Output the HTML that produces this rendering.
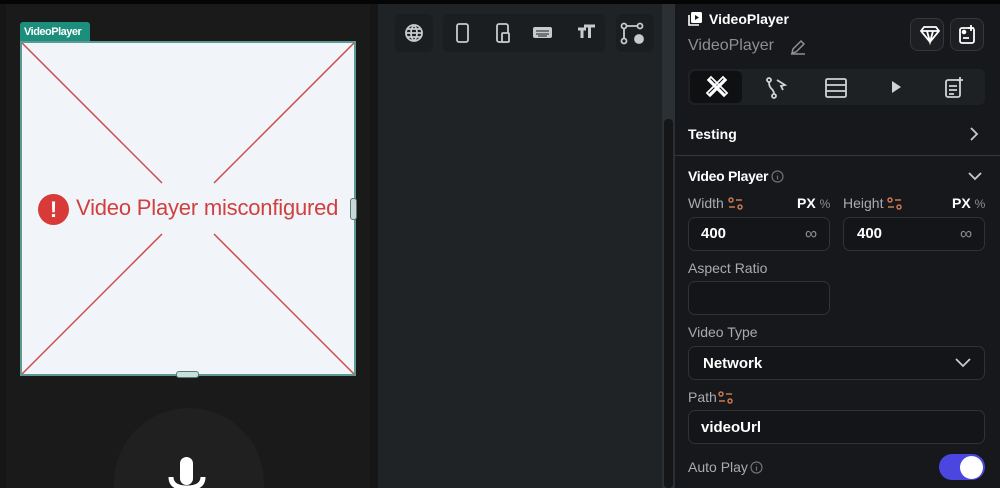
<!DOCTYPE html>
<html style="width:1000px;height:488px;overflow:hidden"><head><meta charset="utf-8"><style>
*{box-sizing:border-box;margin:0;padding:0}
body{width:1000px;height:488px;overflow:hidden;background:#1f2326;font-family:"Liberation Sans",sans-serif;position:relative}
.abs{position:absolute}
.lbl{color:#a9abb0;font-size:14px}
.inp{position:absolute;border:1px solid #2f3236;border-radius:7px;background:#141518}
.val{color:#fff;font-weight:bold;font-size:15px;position:absolute}
</style></head><body>
<svg class="abs" style="left:0;top:0" width="1000" height="488">
<rect x="0" y="0" width="1000" height="4" fill="#050505"/>
<rect x="0" y="4" width="378" height="484" fill="#161616"/>
<rect x="6" y="4" width="364" height="484" fill="#1a1a1a"/>
<circle cx="189" cy="483" r="75" fill="#202020"/>
<rect x="180" y="457" width="13" height="28" rx="6.5" fill="#fff"/>
<path d="M171 477 Q171 488 187 488 Q203 488 203 477" stroke="#fff" stroke-width="5" fill="none"/>
<rect x="662" y="4" width="13" height="484" fill="#2b3034"/>
<rect x="664" y="119" width="9" height="369" rx="4" fill="#141618"/>
<rect x="675" y="4" width="325" height="484" fill="#17181b"/>
<rect x="939" y="454" width="46" height="26" rx="13" fill="#4b46e0"/>
<circle cx="971.5" cy="467.5" r="11.5" fill="#fff"/>
</svg>
<div class="abs" style="left:20px;top:22px;width:70px;height:20px;background:#1b8e7c;border-radius:3px 3px 0 0;color:#fff;font-size:11px;font-weight:bold;padding:4px 0 0 4px;letter-spacing:-0.5px">VideoPlayer</div>
<div class="abs" style="left:20px;top:41px;width:336px;height:335px;background:#f1f4f8;border:2px solid #5a9a92"></div>
<svg class="abs" style="left:22px;top:43px" width="332" height="331"><line x1="0" y1="0" x2="140" y2="140" stroke="#d04a4a" stroke-width="1.5"/><line x1="332" y1="0" x2="192" y2="140" stroke="#d04a4a" stroke-width="1.5"/><line x1="0" y1="331" x2="140" y2="191" stroke="#d04a4a" stroke-width="1.5"/><line x1="332" y1="331" x2="192" y2="191" stroke="#d04a4a" stroke-width="1.5"/></svg>
<div class="abs" style="left:38px;top:194px;width:31px;height:31px;border-radius:50%;background:#d83a3a;color:#fff;font-weight:bold;font-size:22px;text-align:center;line-height:31px">!</div>
<div class="abs" style="left:76px;top:195px;color:#d0403f;font-size:22px;white-space:nowrap;letter-spacing:-0.2px">Video Player misconfigured</div>
<div class="abs" style="left:350px;top:198px;width:7px;height:22px;background:#c8d8d8;border:1px solid #5a7a78;border-radius:3px"></div>
<div class="abs" style="left:176px;top:371px;width:23px;height:7px;background:#c8e0dc;border:1px solid #5a7a78;border-radius:3px"></div>
<!-- middle toolbar -->
<div class="abs" style="left:395px;top:14px;width:38px;height:38px;background:#1b1e20;border-radius:6px"></div>
<div class="abs" style="left:443px;top:14px;width:162px;height:38px;background:#1b1e20;border-radius:6px"></div>
<div class="abs" style="left:616px;top:14px;width:38px;height:38px;background:#1b1e20;border-radius:6px"></div>
<svg class="abs" style="left:395px;top:14px" width="260" height="38" fill="none" stroke="#c8cacc" stroke-width="1.8">
<circle cx="19" cy="19" r="8"/><path d="M11 19h16M19 11c-4 4-4 12 0 16M19 11c4 4 4 12 0 16M12.5 15h13M12.5 23h13"/>
<rect x="62" y="10" width="11" height="18" rx="2"/>
<rect x="102" y="10" width="11" height="18" rx="2"/><rect x="107" y="19" width="7" height="9" rx="1" fill="#1b1e20"/>
<rect x="138" y="13" width="19" height="11" rx="2" fill="#c8cacc" stroke="none"/><path d="M141 17h13M141 20h13M143 22h9" stroke="#1b1e20" stroke-width="1"/>
<path d="M183 15h8M187 15v9M189 12h11M194.5 12v12" stroke-width="3"/>
<circle cx="229" cy="12" r="2.5"/><circle cx="245" cy="12" r="2.5"/><circle cx="229" cy="27" r="2.5"/><path d="M231.5 12h11M229 14.5v10"/><circle cx="244" cy="25" r="4" fill="#c8cacc"/>
</svg>
<!-- right panel -->
<svg class="abs" style="left:688px;top:12px" width="14" height="14"><rect x="3" y="0" width="11" height="11" rx="1.5" fill="#fff"/><path d="M1 3v10h10" stroke="#fff" stroke-width="1.6" fill="none"/><path d="M7 3l4 2.5-4 2.5z" fill="#17181b"/></svg>
<div class="abs" style="left:709px;top:11px;color:#fff;font-weight:bold;font-size:14px">VideoPlayer</div>
<div class="abs" style="left:688px;top:37px;color:#8c8f94;font-size:16px">VideoPlayer</div>
<svg class="abs" style="left:789px;top:38px" width="18" height="18" fill="none" stroke="#8c8f94" stroke-width="1.5"><path d="M3 15l1-4 8-8 3 3-8 8zM2 16h14"/></svg>
<div class="abs" style="left:910px;top:18px;width:34px;height:33px;border:1px solid #34373b;border-radius:8px;background:#1d1f22"></div>
<div class="abs" style="left:950px;top:18px;width:34px;height:33px;border:1px solid #34373b;border-radius:8px;background:#1d1f22"></div>
<svg class="abs" style="left:910px;top:18px" width="76" height="34" fill="none" stroke="#fff" stroke-width="1.8"><path d="M11 13l3-4h12l3 4-9 11z M11 13h18 M17 13l3 11 3-11"/><rect x="50" y="10" width="14" height="15" rx="2"/><circle cx="54" cy="14" r="1.4" fill="#fff"/><path d="M53 20h6M61 7v6M58 10h6"/></svg>
<div class="abs" style="left:688px;top:69px;width:297px;height:36px;background:#1e2124;border-radius:6px"></div>
<div class="abs" style="left:690px;top:71px;width:52px;height:32px;background:#0f1012;border-radius:5px"></div>
<svg class="abs" style="left:688px;top:69px" width="297" height="36" fill="none" stroke="#d0d2d5" stroke-width="1.8">
<path d="M21 10l16 16M37 10L21 26M23 8l-3 3 16 16 3-3zM35 8l3 3-16 16-3-3z" stroke="#fff"/>
<circle cx="81" cy="11" r="2"/><circle cx="86" cy="27" r="2"/><path d="M81 13c0 8 5 6 5 12M89 11l8 5-4 1 2 4"/>
<rect x="138" y="10" width="20" height="18" rx="1.5"/><path d="M138 16h20M138 22h20"/>
<path d="M204 12l9 6-9 6z" fill="#d0d2d5" stroke="none"/>
<rect x="258" y="11" width="14" height="17" rx="2"/><path d="M261 17h8M261 21h8M261 25h5M272 8v6M269 11h6"/>
</svg>
<div class="abs" style="left:688px;top:126px;color:#fff;font-weight:bold;font-size:14px">Testing</div>
<svg class="abs" style="left:968px;top:126px" width="12" height="16" fill="none" stroke="#c8cacc" stroke-width="1.8"><path d="M3 2l6 6-6 6"/></svg>
<div class="abs" style="left:675px;top:155px;width:325px;height:1px;background:#34373b"></div>
<div class="abs" style="left:688px;top:168px;color:#fff;font-weight:bold;font-size:14px;letter-spacing:-0.3px">Video Player</div>
<svg class="abs" style="left:771px;top:170px" width="13" height="13" fill="none" stroke="#6e7175" stroke-width="1.2"><circle cx="6.5" cy="6.5" r="5.5"/><path d="M6.5 5.5v4M6.5 3.5v.5"/></svg>
<svg class="abs" style="left:967px;top:170px" width="16" height="12" fill="none" stroke="#c8cacc" stroke-width="1.8"><path d="M2 3l6 6 6-6"/></svg>
<div class="abs lbl" style="left:688px;top:195px">Width</div>
<div class="abs lbl" style="left:843px;top:195px">Height</div>
<svg class="abs" style="left:728px;top:197px" width="16" height="14" fill="none" stroke="#c9784f" stroke-width="1.5"><circle cx="3" cy="3" r="2"/><path d="M8 3h6M1 10h6"/><circle cx="12" cy="10" r="2"/></svg>
<svg class="abs" style="left:887px;top:197px" width="16" height="14" fill="none" stroke="#c9784f" stroke-width="1.5"><circle cx="3" cy="3" r="2"/><path d="M8 3h6M1 10h6"/><circle cx="12" cy="10" r="2"/></svg>
<div class="abs" style="left:797px;top:195px;color:#fff;font-weight:bold;font-size:14px">PX <span style="color:#8c8f94;font-weight:normal;font-size:12px">%</span></div>
<div class="abs" style="left:952px;top:195px;color:#fff;font-weight:bold;font-size:14px">PX <span style="color:#8c8f94;font-weight:normal;font-size:12px">%</span></div>
<div class="inp" style="left:688px;top:217px;width:142px;height:34px"></div>
<div class="inp" style="left:843px;top:217px;width:142px;height:34px"></div>
<div class="val" style="left:701px;top:225px">400</div>
<div class="val" style="left:857px;top:225px">400</div>
<div class="abs" style="left:805px;top:224px;color:#8c8f94;font-size:17px">∞</div>
<div class="abs" style="left:960px;top:224px;color:#8c8f94;font-size:17px">∞</div>
<div class="abs lbl" style="left:688px;top:260px">Aspect Ratio</div>
<div class="inp" style="left:688px;top:281px;width:142px;height:34px"></div>
<div class="abs lbl" style="left:688px;top:324px">Video Type</div>
<div class="inp" style="left:688px;top:346px;width:297px;height:34px"></div>
<div class="val" style="left:703px;top:355px">Network</div>
<svg class="abs" style="left:954px;top:356px" width="18" height="14" fill="none" stroke="#c8cacc" stroke-width="1.8"><path d="M2 3l7 7 7-7"/></svg>
<div class="abs lbl" style="left:688px;top:389px">Path</div>
<svg class="abs" style="left:718px;top:391px" width="16" height="14" fill="none" stroke="#c9784f" stroke-width="1.5"><circle cx="3" cy="3" r="2"/><path d="M8 3h6M1 10h6"/><circle cx="12" cy="10" r="2"/></svg>
<div class="inp" style="left:688px;top:410px;width:297px;height:34px"></div>
<div class="val" style="left:701px;top:419px">videoUrl</div>
<div class="abs lbl" style="left:688px;top:459px">Auto Play</div>
<svg class="abs" style="left:750px;top:461px" width="13" height="13" fill="none" stroke="#6e7175" stroke-width="1.2"><circle cx="6.5" cy="6.5" r="5.5"/><path d="M6.5 5.5v4M6.5 3.5v.5"/></svg>
</body></html>
